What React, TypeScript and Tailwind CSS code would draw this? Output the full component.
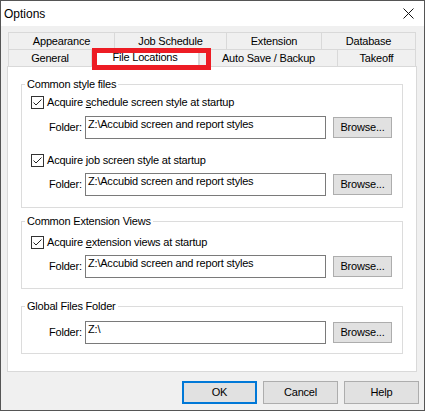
import React from "react";

/**
 * Options dialog - File Locations tab (Windows 10 style)
 */

function Tab({ label, w, last, selected }: { label: string; w: string; last?: boolean; selected?: boolean }) {
  if (selected) {
    return (
      <div className={`${w} relative z-10 flex h-[18px] items-center justify-center border-l border-r border-t border-[#d9d9d9] bg-white pb-[2px]`}>
        {label}
      </div>
    );
  }
  return (
    <div
      className={`${w} flex h-[17px] items-center justify-center border-l border-t border-[#d9d9d9] bg-[#f0f0f0] ${last ? "border-r" : ""}`}
    >
      {label}
    </div>
  );
}

function CheckRow({ children, className }: { children: React.ReactNode; className?: string }) {
  return (
    <div className={`flex h-[16px] items-center pl-[9px] ${className ?? ""}`}>
      <span className="flex h-[13px] w-[13px] items-center justify-center border border-[#333] bg-white">
        <svg width="11" height="11" viewBox="0 0 11 11">
          <path d="M1.5 5.5 L4 8 L9.5 2.5" fill="none" stroke="#222" strokeWidth="1" />
        </svg>
      </span>
      <span className="ml-[3px]">{children}</span>
    </div>
  );
}

function FolderRow({ value, className }: { value: string; className?: string }) {
  return (
    <div className={`flex h-[23px] items-center pl-[27px] ${className ?? ""}`}>
      <span className="w-[36px]">Folder:</span>
      <div className="h-[23px] w-[241px] border border-[#7a7a7a] bg-white pl-[2px] pt-[1px] leading-[13px]">{value}</div>
      <button className="ml-[7px] h-[21px] w-[59px] border border-[#adadad] bg-[#e1e1e1]">Browse...</button>
    </div>
  );
}

function Group({ title, children, className }: { title: string; children: React.ReactNode; className?: string }) {
  return (
    <fieldset className={`ml-[13px] w-[382px] border border-[#dcdcdc] ${className ?? ""}`}>
      <legend className="ml-[3px] px-[2px] leading-[14px]">{title}</legend>
      {children}
    </fieldset>
  );
}

export default function App() {
  return (
    <div className="relative flex h-[411px] w-[425px] flex-col border border-[#555] bg-[#f0f0f0] font-['Liberation_Sans',Arial,sans-serif] text-[11px] tracking-[-0.2px] text-black">
      {/* Title bar */}
      <div className="flex h-[25px] shrink-0 items-center justify-between bg-white pl-[3px] pr-[10px]">
        <span className="text-[12px] tracking-normal">Options</span>
        <svg width="11" height="11" viewBox="0 0 11 11">
          <path d="M0.5 0.5 L10.5 10.5 M10.5 0.5 L0.5 10.5" stroke="#111" strokeWidth="1" />
        </svg>
      </div>

      {/* Tabs */}
      <div className="ml-[7px] mt-[6px] w-[408px]">
        <div className="flex h-[17px]">
          <Tab label="Appearance" w="w-[106px]" />
          <Tab label="Job Schedule" w="w-[112px]" />
          <Tab label="Extension" w="w-[95px]" />
          <Tab label="Database" w="w-[95px]" last />
        </div>
        <div className="flex h-[17px] items-start">
          <Tab label="General" w="w-[83px]" />
          <Tab label="File Locations" w="w-[108px]" selected />
          <Tab label="Auto Save / Backup" w="w-[138px]" />
          <Tab label="Takeoff" w="w-[79px]" last />
        </div>
      </div>

      {/* Tab page */}
      <div className="ml-[6px] h-[306px] w-[410px] shrink-0 border border-[#d9d9d9] bg-white pt-[10px]">
        <Group title="Common style files" className="pb-[11px]">
          <CheckRow className="mt-[3px]">
            Acquire <span className="underline">s</span>chedule screen style at startup
          </CheckRow>
          <FolderRow className="mt-[6px]" value="Z:\Accubid screen and report styles" />
          <CheckRow className="mt-[13px]">Acquire job screen style at startup</CheckRow>
          <FolderRow className="mt-[5px]" value="Z:\Accubid screen and report styles" />
        </Group>

        <Group title="Common Extension Views" className="mt-[6px] pb-[10px]">
          <CheckRow className="mt-[6px]">
            Acquire <span className="underline">e</span>xtension views at startup
          </CheckRow>
          <FolderRow className="mt-[5px]" value="Z:\Accubid screen and report styles" />
        </Group>

        <Group title="Global Files Folder" className="mt-[10px] pb-[9px]">
          <FolderRow className="mt-[8px]" value="Z:\" />
        </Group>
      </div>

      {/* Dialog buttons */}
      <div className="mt-[9px] flex justify-end gap-[6px] pr-[5px]">
        <button className="h-[23px] w-[75px] border border-[#0078d7] bg-[#e1e1e1] shadow-[inset_0_0_0_1px_#0078d7]">OK</button>
        <button className="h-[23px] w-[75px] border border-[#adadad] bg-[#e1e1e1]">Cancel</button>
        <button className="h-[23px] w-[75px] border border-[#adadad] bg-[#e1e1e1]">Help</button>
      </div>

      {/* Annotation highlight */}
      <div className="absolute left-[91px] top-[47px] z-20 h-[22px] w-[119px] border-[5px] border-[#ed1c24]" />
    </div>
  );
}
